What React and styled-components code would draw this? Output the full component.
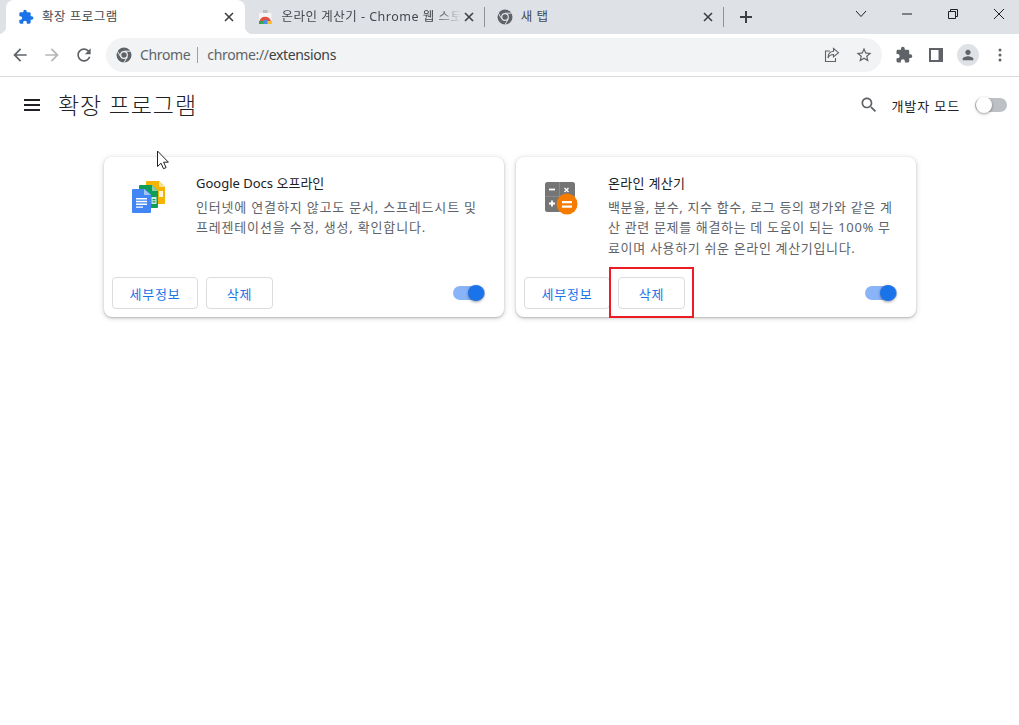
import React from "react";
import styled, { createGlobalStyle } from "styled-components";

const Global = createGlobalStyle`
  html, body { margin: 0; padding: 0; background: #fff; }
  body { font-family: "Noto Sans", "Noto Sans CJK KR", sans-serif; overflow: hidden; }
  #root { height: 725px; }
`;

const Win = styled.div`position: relative; width: 1019px; height: 725px; background: #fff; overflow: hidden;`;
const TabStrip = styled.div`display: flex; height: 34px; background: #dee1e6; padding-left: 6px; box-sizing: border-box; align-items: stretch;`;
const Tab = styled.div`
  position: relative; width: 239.4px; flex: none; display: flex; align-items: center; box-sizing: border-box;
  padding: 0 8px 0 12px; border-radius: 8px 8px 0 0; color: #45494e;
  background: ${p => (p.$active ? "#fff" : "transparent")};
  ${p => p.$active && `
    &::before, &::after { content: ""; position: absolute; bottom: 0; width: 8px; height: 8px; }
    &::before { left: -8px; background: radial-gradient(circle at 0 0, transparent 8px, #fff 8.5px); }
    &::after { right: -8px; background: radial-gradient(circle at 100% 0, transparent 8px, #fff 8.5px); }
  `}
  ${p => p.$sep && `
    &::after { content: ""; position: absolute; right: 0; top: 7px; width: 1px; height: 20px; background: #8e9196; }
  `}
`;
const Fav = styled.div`width: 16px; height: 16px; flex: none; display: flex; margin-right: 8px; color: ${p => p.$color || "inherit"};`;
const TabTitle = styled.div`
  flex: 1; min-width: 0; white-space: nowrap; overflow: hidden; font-size: 12.5px; line-height: 16px; letter-spacing: 0.5px;
  ${p => p.$fade && `-webkit-mask-image: linear-gradient(90deg, #000 86%, transparent 100%);`}
`;
const TabClose = styled.div`width: 16px; height: 16px; flex: none; display: flex; color: #3c4043;`;
const NewTab = styled.div`width: 24px; height: 34px; margin-left: 10px; display: flex; align-items: center; justify-content: center; color: #3c4043;`;
const WinControls = styled.div`margin-left: auto; display: flex; height: 28px; margin-right: -3px;`;
const WinBtn = styled.div`width: 46px; height: 28px; display: flex; align-items: center; justify-content: center; color: #202124;`;

const Toolbar = styled.div`height: 43px; box-sizing: border-box; border-bottom: 1px solid #dadce0; background: #fff; display: flex; align-items: center; padding: 0 0 0 4px;`;
const NavBtn = styled.div`
  width: 32px; height: 32px; flex: none; display: flex; align-items: center; justify-content: center;
  color: ${p => (p.$off ? "#b4b6b9" : "#5f6368")};
`;
const Omni = styled.div`
  margin-left: 6px; width: 776px; height: 34px; flex: none; border-radius: 17px; background: #f1f3f4;
  display: flex; align-items: center; padding: 0 2px 0 10px; box-sizing: border-box; font-size: 14px; color: #5f6368; margin-top: -1px; letter-spacing: -0.35px;
`;
const Scheme = styled.span`margin-left: 8px;`;
const OmniDivider = styled.span`width: 1px; height: 16px; background: #9aa0a6; margin: 0 9px 0 7px;`;
const Host = styled.span`color: #5f6368; & b { font-weight: 400; color: #3c4043; }`;
const OmniRight = styled.div`margin-left: auto; display: flex;`;
const ToolIcons = styled.div`display: flex; align-items: center; margin-left: 6px;`;
const Avatar = styled.div`width: 22px; height: 22px; border-radius: 50%; background: #dee1e6; display: flex; align-items: center; justify-content: center; color: #5f6368;`;

const Header = styled.header`height: 56px; display: flex; align-items: center; padding: 0 12px 0 24px;`;
const Burger = styled.div`width: 16px; height: 12px; display: flex; flex-direction: column; justify-content: space-between; margin-right: 18px; & i { display: block; height: 2px; background: #202124; }`;
const PageTitle = styled.h1`margin: 0; font-size: 23px; font-weight: 300; color: #202124; letter-spacing: 0.85px; line-height: 28px;`;
const HeaderRight = styled.div`margin-left: auto; display: flex; align-items: center; color: #5f6368;`;
const DevLabel = styled.span`font-size: 13px; color: #202124; margin: 0 15px 0 12px; letter-spacing: 0.9px;`;

const Track = styled.div`
  position: relative; width: 32px; height: 14px; border-radius: 7px; flex: none;
  background: ${p => (p.$on ? "#8ab4f8" : "#bdc1c6")};
`;
const Knob = styled.div`
  position: absolute; top: -1px; width: 16px; height: 16px; border-radius: 50%;
  ${p => (p.$on ? "right: 1px; background: #1a73e8;" : "left: 1px; background: #fff;")}
  box-shadow: 0 1px 3px rgba(0,0,0,.4);
`;

const Cards = styled.main`display: grid; grid-template-columns: 400px 400px; gap: 12px; justify-content: center; padding: 24px 0 0 1px;`;
const Card = styled.article`
  position: relative; height: 160px; border-radius: 8px; background: #fff; display: flex; flex-direction: column;
  box-shadow: 0 1px 2px rgba(60,64,67,.3), 0 1px 5px 1px rgba(60,64,67,.15);
`;
const CardMain = styled.div`flex: 1; display: flex; padding: 16px 20px 0 28px;`;
const IconBox = styled.div`width: 42px; height: 42px; margin-top: 7px; margin-right: 22px; flex: none;`;
const CardText = styled.div`min-width: 0;`;
const CardTitle = styled.div`font-size: 13px; line-height: 20px; color: #202124; white-space: nowrap; letter-spacing: ${p => p.$ls || 0}px;`;
const CardDesc = styled.div`font-size: 13px; line-height: 20.4px; color: #5f6368; white-space: nowrap; margin-top: 4px; letter-spacing: ${p => p.$ls}px;`;
const CardFoot = styled.div`height: 48px; display: flex; align-items: center; padding: 0 19px 0 8px;`;
const Btn = styled.button`
  height: 32px; width: ${p => p.$w}px; box-sizing: border-box; border: 1px solid #dadce0; border-radius: 4px; background: #fff;
  color: #1a73e8; font: inherit; font-size: 13px; padding: 0; margin-right: 8px; letter-spacing: 0.8px;
`;
const FootSpacer = styled.div`flex: 1;`;
const RedBox = styled.div`position: absolute; left: 93px; top: 110px; width: 85px; height: 51px; box-sizing: border-box; border: 2px solid #ed1c24;`;
const Cursor = styled.svg`position: absolute; left: 156px; top: 150px;`;

const I = ({ d, s = 20, vb = 24, fill = "currentColor" }) => (
  <svg width={s} height={s} viewBox={`0 0 ${vb} ${vb}`} fill={fill}><path d={d} /></svg>
);
const P = {
  back: "M20 11H7.83l5.59-5.59L12 4l-8 8 8 8 1.41-1.41L7.83 13H20v-2z",
  fwd: "M4 11h12.17l-5.59-5.59L12 4l8 8-8 8-1.41-1.41L16.17 13H4v-2z",
  reload: "M17.65 6.35C16.2 4.9 14.21 4 12 4c-4.42 0-7.99 3.58-7.99 8s3.57 8 7.99 8c3.73 0 6.84-2.55 7.73-6h-2.08c-.82 2.33-3.04 4-5.65 4-3.31 0-6-2.69-6-6s2.69-6 6-6c1.66 0 3.14.69 4.22 1.78L13 11h7V4l-2.35 2.35z",
  ext: "M20.5 11H19V7c0-1.1-.9-2-2-2h-4V3.5C13 2.12 11.88 1 10.5 1S8 2.12 8 3.5V5H4c-1.1 0-1.99.9-1.99 2v3.8H3.5c1.49 0 2.7 1.21 2.7 2.7s-1.21 2.7-2.7 2.7H2V20c0 1.1.9 2 2 2h3.8v-1.5c0-1.49 1.21-2.7 2.7-2.7 1.49 0 2.7 1.21 2.7 2.7V22H17c1.1 0 2-.9 2-2v-4h1.5c1.38 0 2.5-1.12 2.5-2.5S21.88 11 20.5 11z",
  search: "M15.5 14h-.79l-.28-.27C15.41 12.59 16 11.11 16 9.5 16 5.91 13.09 3 9.5 3S3 5.91 3 9.5 5.91 16 9.5 16c1.61 0 3.09-.59 4.23-1.57l.27.28v.79l5 4.99L20.49 19l-4.99-5zm-6 0C7.01 14 5 11.99 5 9.5S7.01 5 9.5 5 14 7.01 14 9.5 11.99 14 9.5 14z",
  star: "M22 9.24l-7.19-.62L12 2 9.19 8.63 2 9.24l5.46 4.73L5.82 21 12 17.27 18.18 21l-1.63-7.03L22 9.24zM12 15.4l-3.76 2.27 1-4.28-3.32-2.88 4.38-.38L12 6.1l1.71 4.04 4.38.38-3.32 2.88 1 4.28L12 15.4z",
  person: "M12 12c2.21 0 4-1.79 4-4s-1.79-4-4-4-4 1.79-4 4 1.79 4 4 4zm0 2c-2.67 0-8 1.34-8 4v2h16v-2c0-2.66-5.33-4-8-4z",
};

const Close = () => (
  <svg width="16" height="16" viewBox="0 0 16 16" stroke="currentColor" strokeWidth="1.6"><path d="M4 4l8 8M12 4l-8 8" /></svg>
);
const ChromeMono = ({ s = 16, gap = "#f1f3f4" }) => (
  <svg width={s} height={s} viewBox="0 0 16 16">
    <circle cx="8" cy="8" r="7.5" fill="#5f6368" />
    <circle cx="8" cy="8" r="3.9" fill={gap} />
    <circle cx="8" cy="8" r="2.7" fill="#5f6368" />
    <path d="M8 4.2h6.6M4.7 9.9L1.4 4.2M11.3 9.9L8 15.6" stroke={gap} strokeWidth="1" />
  </svg>
);
const StoreFav = () => (
  <svg width="16" height="16" viewBox="0 0 16 16">
    <rect x="6" y="1" width="4.5" height="3" fill="#bdbdbd" />
    <rect x="2" y="4" width="12.5" height="11" fill="#f5f5f5" />
    <path d="M2.3 12.5A6 6 0 0 1 14 12.500L10 12.5H6z" fill="#e25141" />
    <path d="M2 12h4.8L7 15H2z" fill="#34a853" />
    <path d="M10 12h5v3h-5z" fill="#fbc02d" />
    <rect x="6.5" y="11" width="4" height="4" fill="#4a90e8" />
  </svg>
);
const DocsIcon = () => (
  <svg width="42" height="42" viewBox="0 0 42 42" style={{ display: "block" }}>
    <path d="M15 1h12l6 6v16a1 1 0 0 1-1 1H15a1 1 0 0 1-1-1V2a1 1 0 0 1 1-1z" fill="#f4b400" />
    <path d="M27 1l6 6h-6z" fill="#fadf8f" />
    <rect x="27" y="11" width="4" height="6" fill="#fff" opacity=".85" />
    <path d="M8 5h12l6 6v16a1 1 0 0 1-1 1H8a1 1 0 0 1-1-1V6a1 1 0 0 1 1-1z" fill="#0f9d58" />
    <path d="M20 5l6 6h-6z" fill="#87ceac" />
    <path d="M19.5 17h5v7h-5zM20.5 19v1.2h3V19zM20.5 21.2v1.3h3v-1.3z" fill="#fff" fillRule="evenodd" opacity=".8" />
    <path d="M1 9h12l6 6v17a1 1 0 0 1-1 1H1a1 1 0 0 1-1-1V10a1 1 0 0 1 1-1z" fill="#4285f4" />
    <path d="M12 9l7 6h-7z" fill="#a1c2fa" />
    <path d="M4 18h11v1.4H4zM4 20.8h11v1.4H4zM4 23.6h11V25H4zM4 26.4h7v1.4H4z" fill="#fff" />
  </svg>
);
const CalcIcon = () => (
  <svg width="42" height="42" viewBox="0 0 42 42" style={{ display: "block" }}>
    <rect x="1" y="2" width="30" height="30" rx="2.5" fill="#757575" />
    <path d="M15.5 2v30M1 16.5h30" stroke="#8a8a8a" strokeWidth="1" />
    <path d="M5 9.5h6" stroke="#fff" strokeWidth="1.8" />
    <path d="M20.5 8l4 4M24.5 8l-4 4" stroke="#fff" strokeWidth="1.4" />
    <path d="M5 23.5h6M8 20.5v6" stroke="#fff" strokeWidth="1.8" />
    <circle cx="23" cy="24" r="10.5" fill="#f57c00" />
    <path d="M18 21h10v2.2H18zM18 25.5h10v2.2H18z" fill="#fff" />
  </svg>
);

export default function App() {
  return (
    <Win>
      <Global />
      <TabStrip>
        <Tab $active>
          <Fav $color="#1a73e8"><I d={P.ext} s={16} /></Fav>
          <TabTitle>확장 프로그램</TabTitle>
          <TabClose><Close /></TabClose>
        </Tab>
        <Tab $sep>
          <Fav><StoreFav /></Fav>
          <TabTitle $fade>온라인 계산기 - Chrome 웹 스토어</TabTitle>
          <TabClose><Close /></TabClose>
        </Tab>
        <Tab $sep>
          <Fav><ChromeMono gap="#dee1e6" /></Fav>
          <TabTitle>새 탭</TabTitle>
          <TabClose><Close /></TabClose>
        </Tab>
        <NewTab>
          <svg width="14" height="14" viewBox="0 0 14 14" stroke="currentColor" strokeWidth="2"><path d="M7 1v12M1 7h12" /></svg>
        </NewTab>
        <WinControls>
          <WinBtn><svg width="12" height="8" viewBox="0 0 12 8" fill="none" stroke="currentColor"><path d="M1 1l5 5.5L11 1" /></svg></WinBtn>
          <WinBtn><svg width="10" height="2" viewBox="0 0 10 2" stroke="currentColor"><path d="M0 1h10" /></svg></WinBtn>
          <WinBtn><svg width="10" height="10" viewBox="0 0 10 10" fill="none" stroke="currentColor"><path d="M.5 2.5h7v7h-7zM2.5 2.5V.5h7v7h-2" /></svg></WinBtn>
          <WinBtn><svg width="10" height="10" viewBox="0 0 10 10" stroke="currentColor"><path d="M0 0l10 10M10 0L0 10" /></svg></WinBtn>
        </WinControls>
      </TabStrip>

      <Toolbar>
        <NavBtn><I d={P.back} /></NavBtn>
        <NavBtn $off><I d={P.fwd} /></NavBtn>
        <NavBtn><I d={P.reload} /></NavBtn>
        <Omni>
          <ChromeMono />
          <Scheme>Chrome</Scheme>
          <OmniDivider />
          <Host>chrome://<b>extensions</b></Host>
          <OmniRight>
            <NavBtn>
              <svg width="16" height="16" viewBox="0 0 16 16" fill="none" stroke="currentColor" strokeWidth="1.1">
                <path d="M6 4H1.5v10.5h10V11" />
                <path d="M9.5 1.5l5 4.2-5 4.2V7.5C7 7.5 5 8.5 4 11c0-4 2-6.5 5.5-6.800z" />
              </svg>
            </NavBtn>
            <NavBtn><I d={P.star} s={18} /></NavBtn>
          </OmniRight>
        </Omni>
        <ToolIcons>
          <NavBtn><I d={P.ext} s={18} /></NavBtn>
          <NavBtn>
            <svg width="14" height="14" viewBox="0 0 14 14" fill="none" stroke="currentColor"><path d="M1 1h12v12H1z" strokeWidth="2" /><path d="M9.5 1v12H13V1z" fill="currentColor" stroke="none" /></svg>
          </NavBtn>
          <NavBtn><Avatar><I d={P.person} s={16} /></Avatar></NavBtn>
          <NavBtn>
            <svg width="4" height="14" viewBox="0 0 4 14" fill="currentColor"><circle cx="2" cy="2" r="1.5" /><circle cx="2" cy="7" r="1.5" /><circle cx="2" cy="12" r="1.5" /></svg>
          </NavBtn>
        </ToolIcons>
      </Toolbar>

      <Header>
        <Burger><i /><i /><i /></Burger>
        <PageTitle>확장 프로그램</PageTitle>
        <HeaderRight>
          <I d={P.search} />
          <DevLabel>개발자 모드</DevLabel>
          <Track><Knob /></Track>
        </HeaderRight>
      </Header>

      <Cards>
        <Card>
          <CardMain>
            <IconBox><DocsIcon /></IconBox>
            <CardText>
              <CardTitle>Google Docs 오프라인</CardTitle>
              <CardDesc $ls={0.82}>인터넷에 연결하지 않고도 문서, 스프레드시트 및<br />프레젠테이션을 수정, 생성, 확인합니다.</CardDesc>
            </CardText>
          </CardMain>
          <CardFoot>
            <Btn $w={86}>세부정보</Btn>
            <Btn $w={67}>삭제</Btn>
            <FootSpacer />
            <Track $on><Knob $on /></Track>
          </CardFoot>
        </Card>
        <Card>
          <CardMain>
            <IconBox><CalcIcon /></IconBox>
            <CardText>
              <CardTitle $ls={0.3}>온라인 계산기</CardTitle>
              <CardDesc $ls={0.66}>백분율, 분수, 지수 함수, 로그 등의 평가와 같은 계<br />산 관련 문제를 해결하는 데 도움이 되는 100% 무<br />료이며 사용하기 쉬운 온라인 계산기입니다.</CardDesc>
            </CardText>
          </CardMain>
          <CardFoot>
            <Btn $w={86}>세부정보</Btn>
            <Btn $w={67}>삭제</Btn>
            <FootSpacer />
            <Track $on><Knob $on /></Track>
          </CardFoot>
          <RedBox />
        </Card>
      </Cards>

      <Cursor width="13" height="20" viewBox="0 0 13 20">
        <path d="M1.5 1v15.500l3.500-3.300 2.500 5.500 2.600-1.100-2.500-5.400h4.800z" fill="#fff" stroke="#222" strokeWidth="1" strokeLinejoin="round" />
      </Cursor>
    </Win>
  );
}
